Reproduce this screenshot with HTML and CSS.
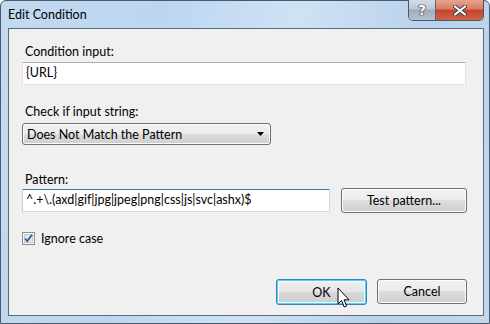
FILE: index.html
```html
<!DOCTYPE html>
<html lang="en">
<head>
    <meta charset="UTF-8">
    <title>Edit Condition</title>
    <link rel="stylesheet" href="styles.css">
</head>
<body>
    <div class="window">
        <div class="titlebar">
            <span class="title">Edit Condition</span>
            <div class="caption-buttons">
                <div class="cap-btn help">?</div>
                <div class="cap-btn close">
                    <svg width="14" height="11" viewBox="0 0 14 11">
                        <path d="M2 1.5 L12 9.5 M12 1.5 L2 9.5" stroke="#3a3f48" stroke-width="4" stroke-linecap="round"/>
                        <path d="M2 1.5 L12 9.5 M12 1.5 L2 9.5" stroke="#ffffff" stroke-width="2.2" stroke-linecap="round"/>
                    </svg>
                </div>
            </div>
        </div>
        <div class="client">
            <label class="field-label first">Condition input:</label>
            <div class="textbox wide">{URL}</div>

            <label class="field-label second">Check if input string:</label>
            <div class="combo">
                <span>Does Not Match the Pattern</span>
                <svg width="7" height="4" viewBox="0 0 7 4"><path d="M0 0 H7 L3.5 4 Z" fill="#000"/></svg>
            </div>

            <label class="field-label third">Pattern:</label>
            <div class="pattern-row">
                <div class="textbox focused">^.+\.(axd|gif|jpg|jpeg|png|css|js|svc|ashx)$</div>
                <div class="btn test">Test pattern...</div>
            </div>

            <div class="check-row">
                <svg class="checkbox" width="13" height="13" viewBox="0 0 13 13">
                    <rect x="0.5" y="0.5" width="12" height="12" fill="#f4f4f4" stroke="#8f8f8f"/>
                    <rect x="2.5" y="2.5" width="8" height="8" fill="#e4e6ea" stroke="#c6c9ce"/>
                    <path d="M3 6.5 L5.3 9 L10 2.8" fill="none" stroke="#3a57a0" stroke-width="1.8"/>
                </svg>
                <span>Ignore case</span>
            </div>

            <div class="dialog-buttons">
                <div class="btn default">OK</div>
                <div class="btn">Cancel</div>
            </div>
        </div>
        <!-- mouse pointer sitting over the OK button -->
        <svg class="pointer" width="14" height="22" viewBox="0 0 14 22">
            <path d="M1 1 L1 17 L4.5 13.5 L7.2 20 L9.6 19 L7 12.8 L12 12.8 Z" fill="#fff" stroke="#000" stroke-width="1" stroke-linejoin="round"/>
        </svg>
    </div>
</body>
</html>
```

FILE: styles.css
```css
body {
    margin: 0;
    padding: 0;
    font-family: Lato, "Open Sans", sans-serif;
    font-size: 12.5px;
    color: #000;
}

.window {
    position: relative;
    width: 490px;
    height: 324px;
    box-sizing: border-box;
    border: 1px solid #4b5a6b;
    border-radius: 6px 6px 0 0;
    padding: 0 5px 7px 7px;
    background: linear-gradient(100deg, #c3d9ef 0%, #bcd6f2 30%, #cfe2f5 55%, #b8d1ec 80%, #c2d7ee 100%);
    display: flex;
    flex-direction: column;
}

.titlebar {
    height: 27px;
    display: flex;
    align-items: flex-start;
    flex-shrink: 0;
}

.title {
    padding-top: 6px;
    color: #000;
}

.caption-buttons {
    margin-left: auto;
    margin-top: -1px;
    display: flex;
    height: 20px;
    border: 1px solid #4e5865;
    border-top: none;
    border-radius: 0 0 5px 5px;
    overflow: hidden;
}

.cap-btn {
    height: 20px;
    display: flex;
    align-items: center;
    justify-content: center;
}

.help {
    width: 26px;
    border-right: 1px solid #5c6470;
    background: linear-gradient(#d3dce6 0%, #bcc7d3 45%, #9fadbd 50%, #b3c1d0 100%);
    color: #fff;
    font-family: "DejaVu Sans", sans-serif;
    font-weight: bold;
    font-size: 14px;
    text-shadow: 0 0 1px #2c3440, 0 0 1px #2c3440, 0 0 1px #2c3440, 0 0 1px #2c3440;
}

.close {
    width: 47px;
    background: linear-gradient(#e8a592 0%, #d77a63 45%, #c4442b 50%, #d2614a 100%);
}

.client {
    flex: 1;
    background: #f0f0f0;
    border: 1px solid #5d6c7c;
    padding: 0 16px 0 13px;
}

.field-label {
    display: block;
    line-height: 15px;
    margin-left: 3px;
}

.field-label.first {
    margin-top: 15px;
    margin-bottom: 3px;
}

.field-label.second {
    margin-top: 19px;
    margin-bottom: 4px;
}

.field-label.third {
    margin-top: 27px;
    margin-bottom: 1px;
}

.textbox {
    height: 23px;
    box-sizing: border-box;
    border: 1px solid #e2e3ea;
    border-top-color: #abadb3;
    background: #fff;
    padding: 0 3px;
    line-height: 20px;
    white-space: nowrap;
}

.textbox.wide {
    width: 444px;
}

.textbox.focused {
    width: 308px;
    border-color: #c5daed;
    border-top-color: #3d7bad;
    border-left-color: #b5cfe7;
}

.combo {
    width: 249px;
    height: 22px;
    box-sizing: border-box;
    border: 1px solid #707070;
    border-radius: 3px;
    background: linear-gradient(#f2f2f2 0%, #ebebeb 50%, #dddddd 50%, #cfcfcf 100%);
    box-shadow: inset 0 0 0 1px #fcfcfc;
    display: flex;
    align-items: center;
    justify-content: space-between;
    padding: 0 6px 0 4px;
}

.pattern-row {
    display: flex;
    align-items: center;
    gap: 11px;
}

.btn {
    height: 25px;
    box-sizing: border-box;
    border: 1px solid #707070;
    border-radius: 3px;
    background: linear-gradient(#f2f2f2 0%, #ebebeb 50%, #dddddd 50%, #cfcfcf 100%);
    box-shadow: inset 0 0 0 1px #fcfcfc;
    display: flex;
    align-items: center;
    justify-content: center;
    width: 90px;
}

.btn.test {
    width: 126px;
}

.check-row {
    margin-top: 18px;
    display: flex;
    align-items: center;
    gap: 6px;
    height: 15px;
}

.dialog-buttons {
    margin-top: 33px;
    display: flex;
    justify-content: flex-end;
    gap: 10px;
}

.btn.default {
    height: 26px;
    width: 91px;
    border-color: #3c7fb1;
    box-shadow: inset 0 0 0 1px #48d8fb, inset 0 0 0 2px #f4fbfe;
    background: linear-gradient(#f0f0f0 0%, #e6e6e6 50%, #d8d8d8 50%, #cccccc 100%);
}

.pointer {
    position: absolute;
    left: 336px;
    top: 286px;
}
```
